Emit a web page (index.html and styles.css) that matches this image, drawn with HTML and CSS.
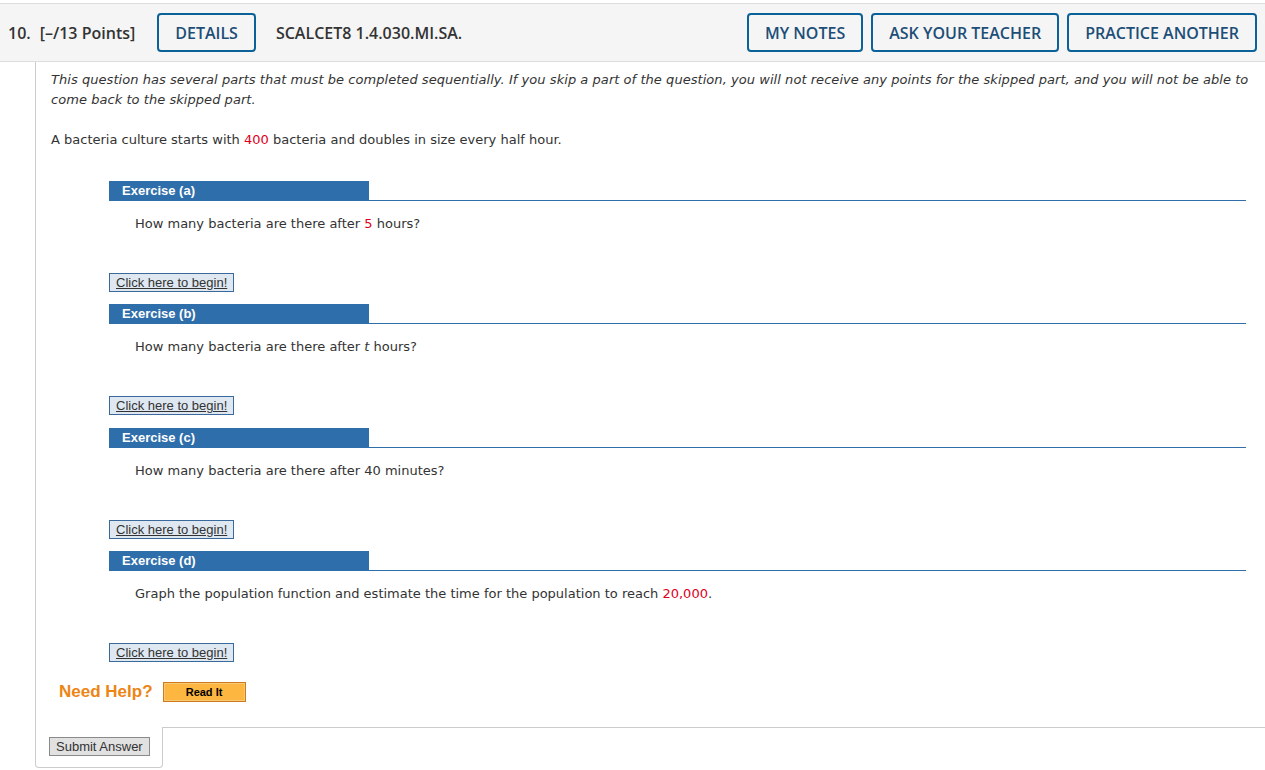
FILE: index.html
```html
<!DOCTYPE html>
<html lang="en">
<head>
<meta charset="UTF-8">
<title>SCALCET8 1.4.030.MI.SA.</title>
<link rel="stylesheet" href="styles.css">
</head>
<body>

<div class="question">
    <div class="q-header">
        <span class="q-num">10.</span>
        <span class="q-points">[&ndash;/13 Points]</span>
        <button class="hdr-btn">DETAILS</button>
        <span class="q-code">SCALCET8 1.4.030.MI.SA.</span>
        <div class="hdr-right">
            <button class="hdr-btn">MY NOTES</button>
            <button class="hdr-btn">ASK YOUR TEACHER</button>
            <button class="hdr-btn">PRACTICE ANOTHER</button>
        </div>
    </div>

    <div class="q-body">
        <p class="note">This question has several parts that must be completed sequentially. If you skip a part of the question, you will not receive any points for the skipped part, and you will not be able to come back to the skipped part.</p>

        <p class="intro">A bacteria culture starts with <span class="red">400</span> bacteria and doubles in size every half hour.</p>

        <div class="exercise">
            <div class="ex-head"><span class="ex-title">Exercise (a)</span></div>
            <p class="ex-text">How many bacteria are there after <span class="red">5</span> hours?</p>
            <button class="begin">Click here to begin!</button>
        </div>

        <div class="exercise">
            <div class="ex-head"><span class="ex-title">Exercise (b)</span></div>
            <p class="ex-text">How many bacteria are there after <i>t</i> hours?</p>
            <button class="begin">Click here to begin!</button>
        </div>

        <div class="exercise">
            <div class="ex-head"><span class="ex-title">Exercise (c)</span></div>
            <p class="ex-text">How many bacteria are there after 40 minutes?</p>
            <button class="begin">Click here to begin!</button>
        </div>

        <div class="exercise">
            <div class="ex-head"><span class="ex-title">Exercise (d)</span></div>
            <p class="ex-text">Graph the population function and estimate the time for the population to reach <span class="red">20,000</span>.</p>
            <button class="begin">Click here to begin!</button>
        </div>

        <div class="help">
            <span class="help-label">Need Help?</span>
            <button class="read-it">Read It</button>
        </div>
    </div>

    <div class="q-footer">
        <div class="submit-tab">
            <button class="submit">Submit Answer</button>
        </div>
        <div class="footer-rest"></div>
    </div>
</div>

</body>
</html>
```

FILE: styles.css
```css
body {
    margin: 0;
    padding: 3px 0 0 0;
    background: #ffffff;
    font-family: "DejaVu Sans", Verdana, sans-serif;
    font-size: 13px;
    color: #333333;
}

.q-header {
    display: flex;
    align-items: center;
    height: 57px;
    padding: 0 8px 0 8px;
    background-color: #f5f5f5;
    border-top: 1px solid #dddddd;
    border-bottom: 1px solid #dddddd;
    font-family: "Open Sans", sans-serif;
    font-weight: 600;
    font-size: 16px;
    color: #333333;
}

.q-num {
    margin-right: 9px;
}

.q-points {
    margin-right: 22px;
}

.q-code {
    margin-left: 20px;
}

.hdr-btn {
    height: 39px;
    padding: 0 16px;
    background: #f5f5f5;
    border: 2px solid #0b6299;
    border-radius: 4px;
    font-family: "Open Sans", sans-serif;
    font-weight: 600;
    font-size: 16px;
    color: #1d4e77;
}

.hdr-right {
    margin-left: auto;
    display: flex;
    gap: 8px;
}

.q-body {
    margin-left: 35px;
    border-left: 1px solid #cccccc;
    padding: 8px 15px 25px 15px;
}

.note {
    margin: 0;
    font-style: italic;
    line-height: 20px;
    letter-spacing: 0.05px;
}

.intro {
    margin: 20px 0 31px 0;
    line-height: 20px;
}

.red {
    color: #e0001b;
}

.exercise {
    margin-left: 58px;
    margin-right: 4px;
    margin-bottom: 12.33px;
}

.ex-head {
    border-bottom: 1px solid #2e6eaa;
    height: 19px;
}

.ex-title {
    display: inline-block;
    width: 247px;
    height: 19px;
    padding-left: 13px;
    background-color: #2e6eaa;
    color: #ffffff;
    font-family: "Liberation Sans", Arial, sans-serif;
    font-weight: bold;
    font-size: 13px;
    line-height: 19px;
}

.ex-text {
    margin: 13px 0 39px 26px;
    line-height: 20px;
}

.begin {
    display: block;
    height: 19px;
    padding: 0 6px;
    background-color: #dfe8f1;
    border: 1px solid #3a6a9b;
    font-family: "Liberation Sans", Arial, sans-serif;
    font-size: 13px;
    text-decoration: underline;
    color: #333333;
}

.help {
    display: flex;
    align-items: center;
    margin: 20px 0 0 8px;
}

.help-label {
    font-family: "Liberation Sans", Arial, sans-serif;
    font-weight: bold;
    font-size: 17px;
    color: #ec8514;
    margin-right: 10px;
}

.read-it {
    width: 83px;
    height: 20px;
    padding: 0;
    background-color: #fdb640;
    border: 1px solid #cf7a22;
    box-shadow: inset 0 0 0 1px #f9c872;
    font-family: "Liberation Sans", Arial, sans-serif;
    font-weight: bold;
    font-size: 11px;
    color: #000000;
}

.q-footer {
    display: flex;
}

.submit-tab {
    margin-left: 35px;
    width: 113px;
    height: 40px;
    padding-left: 13px;
    border: 1px solid #cccccc;
    border-top: none;
    border-radius: 0 0 4px 4px;
    display: flex;
    align-items: center;
}

.submit {
    height: 19px;
    padding: 0 6px;
    background-color: #e1e1e1;
    border: 1px solid #8a8a8a;
    font-family: "Liberation Sans", Arial, sans-serif;
    font-size: 13px;
    color: #333333;
}

.footer-rest {
    flex: 1;
    border-top: 1px solid #cccccc;
}
```
